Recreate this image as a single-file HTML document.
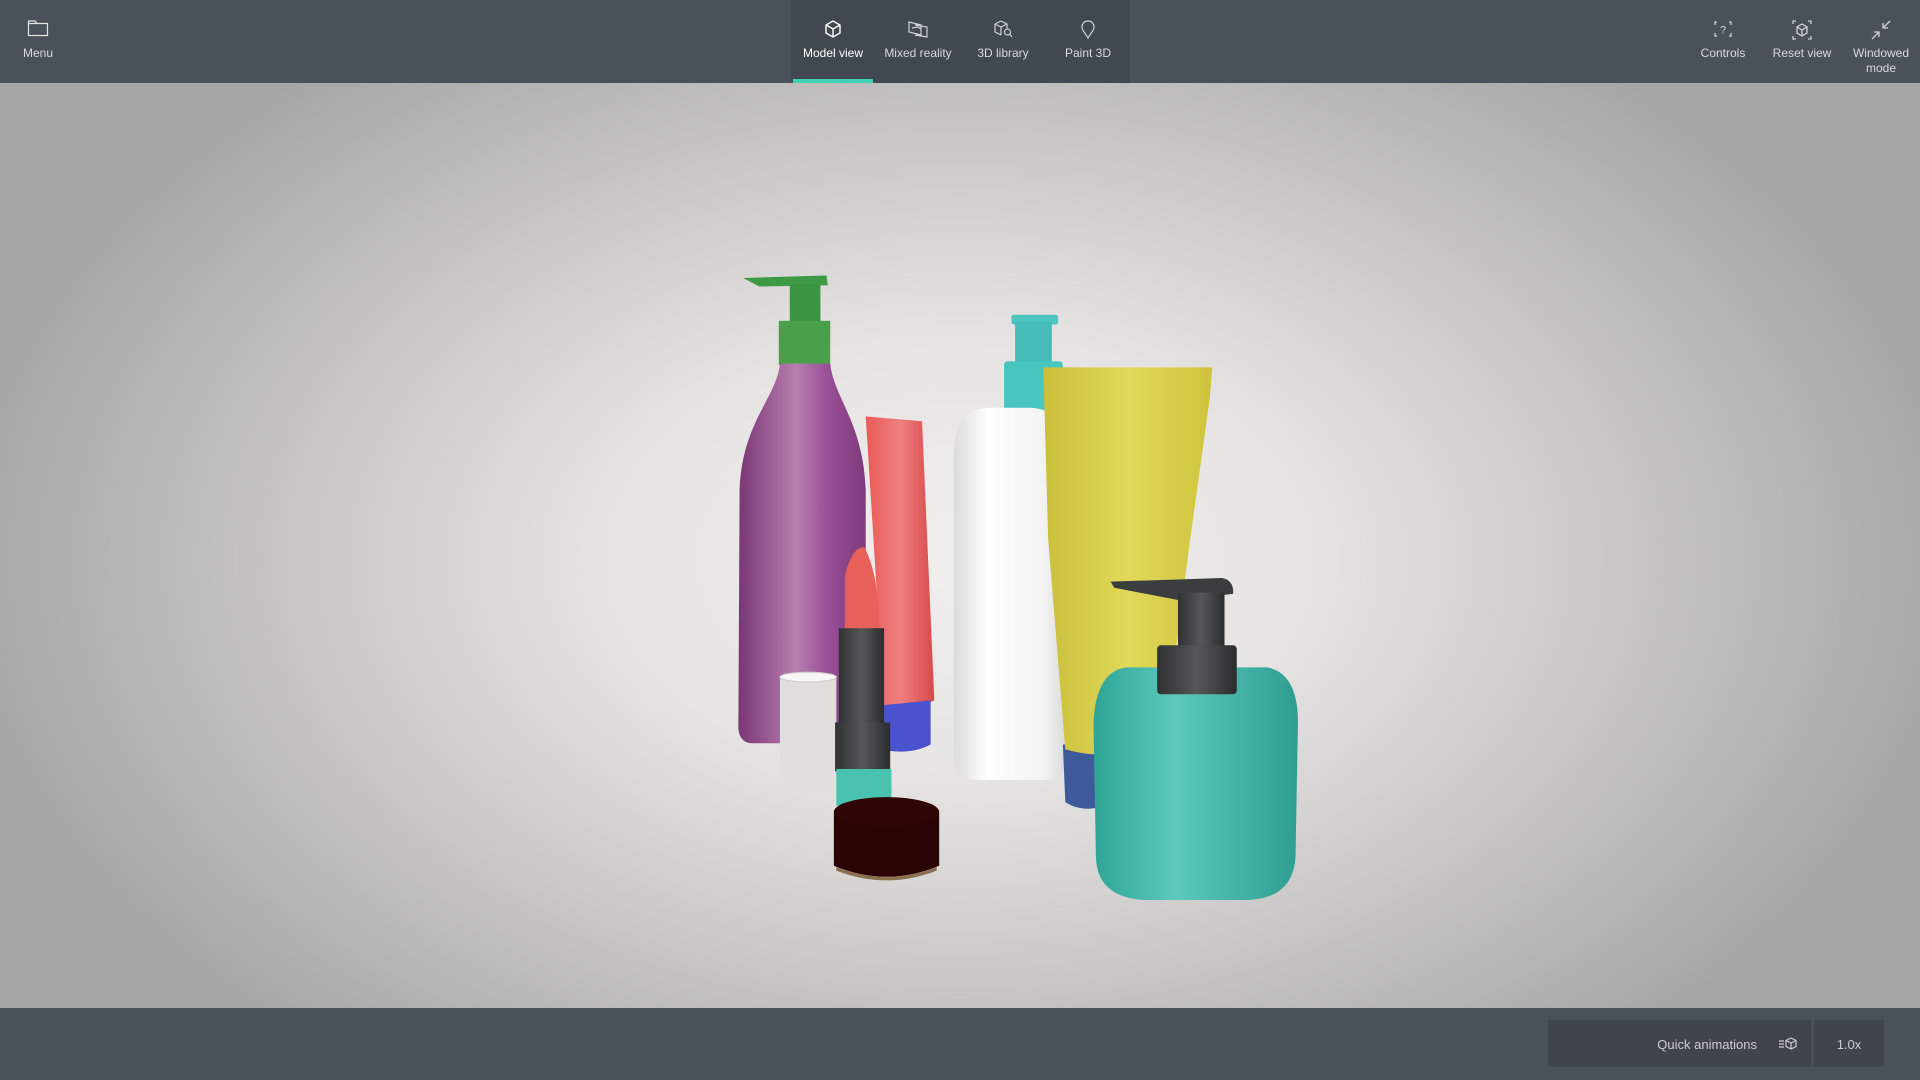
<!DOCTYPE html>
<html><head><meta charset="utf-8"><style>
*{margin:0;padding:0;box-sizing:border-box}
body{width:1920px;height:1080px;overflow:hidden;font-family:"Liberation Sans",sans-serif;position:relative;
background:radial-gradient(ellipse 1000px 640px at 960px 560px,#f1efed 0%,#e6e4e2 35%,#c9c8c7 65%,#a6a6a6 100%);}
.top{position:absolute;left:0;top:0;width:1920px;height:83px;background:#4b5159}
.grp{position:absolute;left:791px;top:0;width:339px;height:83px;background:#42484f}
.it{position:absolute;top:0;text-align:center;color:#d8dadc;font-size:12px;line-height:15px}
.it svg{position:absolute;left:50%;top:19px;transform:translateX(-50%)}
.it span{position:absolute;top:46px;left:0;width:100%}
.ul{position:absolute;left:793px;top:79px;width:80px;height:4px;background:#3fd1b4}
.bot{position:absolute;left:0;top:1008px;width:1920px;height:72px;background:#4b5159}
.box{position:absolute;top:1020px;height:47px;background:#40454c;color:#c9ccd0;font-size:13px;line-height:49px}
</style></head><body>
<svg style="position:absolute;left:0;top:0" width="1920" height="1080" viewBox="0 0 1568 882">
<defs>
<linearGradient id="pur" x1="0" x2="1"><stop offset="0" stop-color="#7a3575"/><stop offset=".45" stop-color="#b77fb0"/><stop offset=".7" stop-color="#9a4f96"/><stop offset="1" stop-color="#7d3b7c"/></linearGradient>
<linearGradient id="red" x1="0" x2="1"><stop offset="0" stop-color="#e85a58"/><stop offset=".5" stop-color="#f08080"/><stop offset="1" stop-color="#d84848"/></linearGradient>
<linearGradient id="wh" x1="0" x2="1"><stop offset="0" stop-color="#dcdcdc"/><stop offset=".3" stop-color="#ffffff"/><stop offset=".8" stop-color="#f2f2f2"/><stop offset="1" stop-color="#d8d8d8"/></linearGradient>
<linearGradient id="yel" x1="0" x2="1"><stop offset="0" stop-color="#c9bf3a"/><stop offset=".5" stop-color="#e2d85a"/><stop offset="1" stop-color="#cfc43c"/></linearGradient>
<linearGradient id="tea" x1="0" x2="1"><stop offset="0" stop-color="#2fa596"/><stop offset=".4" stop-color="#5cc9bb"/><stop offset="1" stop-color="#2e9e90"/></linearGradient>
<linearGradient id="blk" x1="0" x2="1"><stop offset="0" stop-color="#2f3133"/><stop offset=".5" stop-color="#555759"/><stop offset="1" stop-color="#2a2c2e"/></linearGradient>
</defs>
<path d="M607,227 L675,225 L676,233 L620,234 Z" fill="#3f9a45"/>
<rect x="645" y="232" width="25" height="32" fill="#3a9440"/>
<rect x="636" y="262" width="42" height="36" fill="#4a9f4a"/>
<path d="M637,297 C634,325 606,345 604,400 L603,595 Q604,607 615,607 L696,607 Q707,607 707,595 L707,400 C705,345 681,325 678,297 Z" fill="url(#pur)"/>
<path d="M707,340 L753,344 L763,572 Q745,580 722,578 Z" fill="url(#red)"/>
<path d="M720,576 L760,572 L760,608 Q745,616 725,613 Z" fill="#4a52d0"/>
<rect x="826" y="257" width="38" height="8" rx="2" fill="#4cc4c0"/>
<rect x="829" y="263" width="30" height="36" fill="#45bcb8"/>
<rect x="820" y="295" width="48" height="40" rx="3" fill="#4ac6c0"/>
<path d="M808,333 L842,333 Q872,335 872,370 L872,618 Q872,637 852,637 L800,637 Q779,637 779,618 L779,370 Q779,333 808,333 Z" fill="url(#wh)"/>
<path d="M868,608 L895,608 L895,660 Q880,662 870,655 Z" fill="#3e5a9a"/>
<path d="M852,300 L990,300 L988,325 L972,440 L950,610 Q905,622 870,612 L856,440 Z" fill="url(#yel)"/>
<rect x="637" y="550" width="46" height="98" rx="5" fill="#e2dede"/>
<ellipse cx="660" cy="553" rx="23" ry="4" fill="#f6f6f6" stroke="#cfcfcf"/>
<path d="M690,515 L690,470 Q696,446 706,447 Q718,470 718,515 Z" fill="#e9605a"/>
<rect x="685" y="513" width="37" height="80" fill="url(#blk)"/>
<rect x="682" y="590" width="45" height="40" fill="url(#blk)"/>
<rect x="683" y="628" width="45" height="30" fill="#49c2b0"/>
<path d="M681,663 L681,707 Q724,725 767,707 L767,663 Z" fill="#2a0404"/>
<ellipse cx="724" cy="663" rx="43" ry="12" fill="#300505"/>
<path d="M683,708 Q724,724 765,708 L765,711 Q724,727 683,711 Z" fill="#8a7050"/>
<path d="M920,545 L1035,545 Q1060,550 1060,590 L1058,700 Q1056,733 1020,735 L935,735 Q896,733 895,700 L893,590 Q895,548 920,545 Z" fill="url(#tea)"/>
<path d="M907,475 L998,472 Q1008,474 1007,485 L962,490 L910,480 Z" fill="#3a3c3e"/>
<rect x="962" y="484" width="38" height="45" fill="url(#blk)"/>
<rect x="945" y="527" width="65" height="40" rx="3" fill="url(#blk)"/>
</svg>

<div class="top"></div>
<div class="grp"></div>
<div class="ul"></div>
<div class="it" style="left:8px;width:60px">
<svg width="22" height="18" viewBox="0 0 22 18" fill="none" stroke="#e0e2e4" stroke-width="1.2"><path d="M1.5,2 H8 L10,4.5 H20.5 V16.5 H1.5 Z M1.5,4.5 H10"/></svg><span>Menu</span></div>
<div class="it" style="left:793px;width:80px;color:#fff">
<svg width="20" height="20" viewBox="0 0 20 20" fill="none" stroke="#fff" stroke-width="1.4"><path d="M10,2 L17,6 V14 L10,18 L3,14 V6 Z M3,6 L10,10 L17,6 M10,10 V18"/></svg><span>Model view</span></div>
<div class="it" style="left:873px;width:90px">
<svg width="22" height="20" viewBox="0 0 22 20" fill="none" stroke="#d0d2d4" stroke-width="1.2"><path d="M2,3 L14,6 V16 L2,13 Z M8,6 L20,8 V18 L8,16 M5,9 L11,8 L14,10 V14"/></svg><span>Mixed reality</span></div>
<div class="it" style="left:963px;width:80px">
<svg width="22" height="20" viewBox="0 0 22 20" fill="none" stroke="#d0d2d4" stroke-width="1.2"><path d="M9,2 L15,5 V9 M3,5 L9,2 M3,5 V13 L9,16 M3,5 L9,8 L15,5 M9,8 V16"/><circle cx="15.5" cy="13" r="3"/><path d="M17.5,15 L20,18"/></svg><span>3D library</span></div>
<div class="it" style="left:1048px;width:80px">
<svg width="16" height="22" viewBox="0 0 16 22" fill="none" stroke="#d0d2d4" stroke-width="1.2"><path d="M8,2 C12,2 14,5 14,8 C14,12 10,15 8,19 C6,15 2,12 2,8 C2,5 4,2 8,2 Z"/></svg><span>Paint 3D</span></div>
<div class="it" style="left:1688px;width:70px">
<svg width="22" height="20" viewBox="0 0 22 20" fill="none" stroke="#d0d2d4" stroke-width="1.3"><path d="M5,3 H3 V6 M3,14 V17 H5 M17,3 H19 V6 M19,14 V17 H17"/><text x="11" y="14.5" font-size="11" text-anchor="middle" fill="#d0d2d4" stroke="none" font-family="Liberation Sans">?</text></svg><span>Controls</span></div>
<div class="it" style="left:1762px;width:80px">
<svg width="22" height="22" viewBox="0 0 22 22" fill="none" stroke="#d0d2d4" stroke-width="1.3"><path d="M5,2 H2 V5 M2,17 V20 H5 M17,2 H20 V5 M20,17 V20 H17 M11,5 L16,8 V14 L11,17 L6,14 V8 Z M6,8 L11,11 L16,8 M11,11 V17"/></svg><span>Reset view</span></div>
<div class="it" style="left:1846px;width:70px">
<svg width="22" height="22" viewBox="0 0 22 22" fill="none" stroke="#d0d2d4" stroke-width="1.3"><path d="M20,2 L13,9 M13,4 V9 H18 M2,20 L9,13 M4,13 H9 V18"/></svg><span>Windowed<br>mode</span></div>

<div class="bot"></div>
<div class="box" style="left:1548px;width:263px;text-align:right;padding-right:54px">Quick animations</div>
<svg style="position:absolute;left:1778px;top:1036px" width="20" height="16" viewBox="0 0 20 16" fill="none" stroke="#c9ccd0" stroke-width="1.2"><path d="M1,5 H6 M1,8 H6 M1,11 H6 M13,2 L18,4.5 V10.5 L13,13 L8,10.5 V4.5 Z M8,4.5 L13,7 L18,4.5 M13,7 V13"/></svg>
<div class="box" style="left:1814px;width:70px;text-align:center">1.0x</div>
</body></html>
